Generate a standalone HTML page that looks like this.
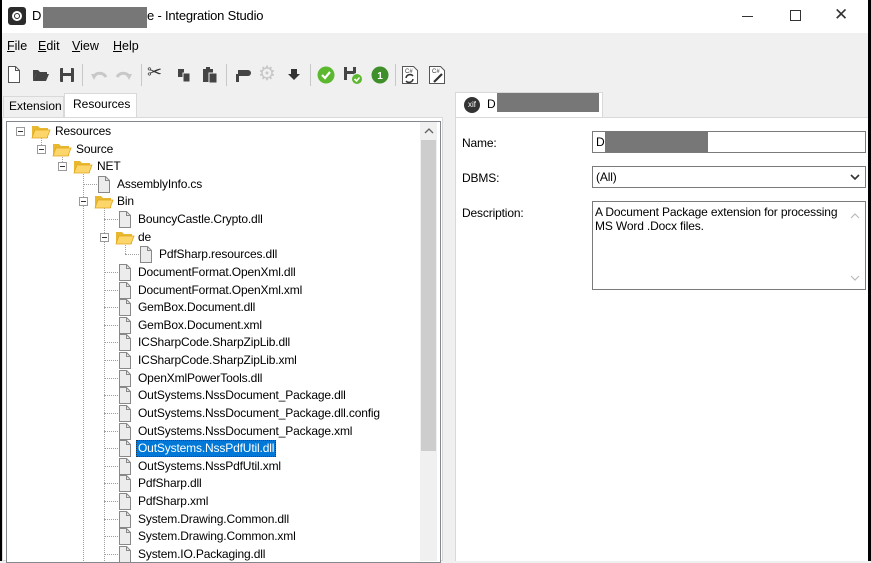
<!DOCTYPE html>
<html><head><meta charset="utf-8">
<style>
*{margin:0;padding:0;box-sizing:border-box}
body{width:871px;height:561px;overflow:hidden;background:#f0f0f0;font-family:"Liberation Sans",sans-serif;font-size:12px;color:#000;position:relative}
.a{position:absolute}
.row{position:absolute;height:18px;line-height:18px;white-space:nowrap;letter-spacing:-0.15px}
.dv{position:absolute;border-left:1px dotted #a0a0a0;width:0}
.dh{position:absolute;border-top:1px dotted #a0a0a0;height:0}
.ex{position:absolute;width:9px;height:9px;border:1px solid #9a9a9a;background:#fff}
.ex:after{content:"";position:absolute;left:1px;top:3px;width:5px;height:1px;background:#333}
.sep{position:absolute;top:64px;width:1px;height:22px;background:#c8c8c8}
.ic{position:absolute;top:66px}
.rp{letter-spacing:-0.15px}
</style></head><body>
<div class="a" style="left:0;top:0;width:871px;height:33px;background:#fff"></div>
<div class="a" style="left:8px;top:7px;width:18px;height:18px;background:#2b2b2b;border-radius:3px"></div>
<div class="a" style="left:12px;top:11px;width:10px;height:10px;border:2px solid #fff;border-radius:50%"></div>
<div class="a" style="left:15px;top:14px;width:4px;height:4px;background:#fff;border-radius:50%"></div>
<div class="a" style="left:32px;top:8px;font-size:13px">D</div>
<div class="a" style="left:43px;top:7px;width:104px;height:21px;background:#777"></div>
<div class="a" style="left:147px;top:8px;font-size:13px;letter-spacing:-0.2px">e - Integration Studio</div>
<div class="a" style="left:742px;top:16px;width:11px;height:1px;background:#333"></div>
<div class="a" style="left:790px;top:10px;width:11px;height:11px;border:1px solid #333"></div>
<div class="a" style="left:834px;top:5px;font-size:17px;color:#333">✕</div>
<div class="a" style="left:868px;top:0;width:3px;height:561px;background:#000"></div>
<div class="a" style="left:0;top:0;width:2px;height:561px;background:#000"></div>
<div class="a" style="left:7px;top:39px;font-size:12.5px"><u>F</u>ile</div>
<div class="a" style="left:38px;top:39px;font-size:12.5px"><u>E</u>dit</div>
<div class="a" style="left:72px;top:39px;font-size:12.5px"><u>V</u>iew</div>
<div class="a" style="left:113px;top:39px;font-size:12.5px"><u>H</u>elp</div>
<svg class="ic" style="left:7px" width="14" height="17"><path d="M1.5 .5h7l4 4v12h-11z" fill="#fff" stroke="#555"/><path d="M8.5 .5v4h4" fill="none" stroke="#555"/></svg>
<svg class="ic" style="left:32px" width="18" height="17"><path d="M1 4h5l2 2h7v2H4l-3 7z" fill="#444"/><path d="M4 8h13l-3 7H1z" fill="#444"/></svg>
<svg class="ic" style="left:59px" width="16" height="17"><rect x="1" y="2" width="14" height="14" rx="1" fill="#444"/><rect x="4" y="2" width="8" height="5" fill="#f0f0f0"/><rect x="4" y="10" width="8" height="6" fill="#f0f0f0"/></svg>
<div class="sep" style="left:82px"></div>
<svg class="ic" style="left:90px" width="18" height="17"><path d="M4 11c2-5 9-5 12 0" fill="none" stroke="#c8c8c8" stroke-width="3"/><path d="M1 8l6 0-3 6z" fill="#c8c8c8"/></svg>
<svg class="ic" style="left:115px" width="18" height="17"><path d="M14 11c-2-5-9-5-12 0" fill="none" stroke="#c8c8c8" stroke-width="3"/><path d="M17 8l-6 0 3 6z" fill="#c8c8c8"/></svg>
<div class="sep" style="left:141px"></div>
<div class="a" style="left:147px;top:62px;font-size:18px;color:#333">✂</div>
<svg class="ic" style="left:176px" width="16" height="17"><rect x="2" y="3" width="6" height="8" fill="#444"/><rect x="7" y="7" width="7" height="9" fill="#444" stroke="#f0f0f0"/></svg>
<svg class="ic" style="left:202px" width="16" height="17"><rect x="1" y="3" width="10" height="13" fill="#444"/><rect x="4" y="1" width="4" height="4" fill="#444"/><rect x="7" y="7" width="8" height="10" fill="#444" stroke="#f0f0f0"/></svg>
<div class="sep" style="left:226px"></div>
<svg class="ic" style="left:232px" width="20" height="17"><path d="M6 4h10a3 3 0 0 1 0 6H6z" fill="#444"/><path d="M4 16V8h3v8z" fill="#444"/></svg>
<div class="a" style="left:258px;top:61px;font-size:20px;color:#c8c8c8">⚙</div>
<svg class="ic" style="left:287px" width="14" height="17"><path d="M4 3h6v5h3l-6 6-6-6h3z" fill="#333"/></svg>
<div class="sep" style="left:310px"></div>
<svg class="ic" style="left:317px" width="18" height="18"><circle cx="9" cy="9" r="8.5" fill="#5cb82f"/><path d="M5 9l3 3 5-6" fill="none" stroke="#fff" stroke-width="2.2"/></svg>
<svg class="ic" style="left:343px" width="20" height="18"><rect x="1" y="1" width="12" height="13" fill="#444"/><rect x="4" y="1" width="6" height="4" fill="#f0f0f0"/><rect x="4" y="8" width="6" height="6" fill="#f0f0f0"/><circle cx="14" cy="13" r="5.5" fill="#5cb82f" stroke="#f0f0f0"/><path d="M11.5 13l2 2 3-3.5" fill="none" stroke="#fff" stroke-width="1.6"/></svg>
<svg class="ic" style="left:371px" width="18" height="18"><circle cx="9" cy="9" r="8.5" fill="#3f8f2a"/><text x="9" y="13" font-size="10" font-weight="bold" fill="#fff" text-anchor="middle" font-family="Liberation Sans">1</text></svg>
<div class="sep" style="left:395px"></div>
<svg class="ic" style="left:401px" width="18" height="18"><path d="M1.5 .5h11l4 4v13h-15z" fill="#fff" stroke="#555"/><text x="4" y="7" font-size="6" fill="#333" font-family="Liberation Sans">C#</text><path d="M5 12a4 4 0 0 1 7-2M12 13a4 4 0 0 1-7 2" fill="none" stroke="#333" stroke-width="1.5"/></svg>
<svg class="ic" style="left:428px" width="18" height="18"><path d="M1.5 .5h11l4 4v13h-15z" fill="#fff" stroke="#555"/><text x="4" y="7" font-size="6" fill="#333" font-family="Liberation Sans">C#</text><path d="M6 16l8-8" stroke="#333" stroke-width="2.2"/></svg>
<div class="a" style="left:3px;top:96px;width:61px;height:21px;border:1px solid #d9d9d9;border-bottom:none;background:#f0f0f0;line-height:19px;padding-left:5px">Extension</div>
<div class="a" style="left:64px;top:93px;width:73px;height:25px;border:1px solid #d9d9d9;border-bottom:none;background:#fff;line-height:21px;padding-left:8px">Resources</div>
<div class="a" style="left:2px;top:117px;width:441px;height:444px;background:#fff;border:1px solid #d9d9d9"></div>
<div class="a" style="left:6px;top:121px;width:435px;height:442px;background:#fff;border:1px solid #828790"></div>
<div class="a" style="left:420px;top:122px;width:17px;height:439px;background:#f0f0f0"></div>
<svg class="a" style="left:424px;top:127px" width="10" height="8"><path d="M1 6l4-4 4 4" fill="none" stroke="#606060" stroke-width="1.3"/></svg>
<div class="a" style="left:421px;top:140px;width:15px;height:311px;background:#cdcdcd"></div>
<div class="dv" style="left:41px;top:135px;height:14px"></div>
<div class="dv" style="left:62px;top:153px;height:13px"></div>
<div class="dv" style="left:83px;top:170px;height:391px"></div>
<div class="dv" style="left:104px;top:205px;height:356px"></div>
<div class="dv" style="left:125px;top:241px;height:13px"></div>
<div class="dh" style="left:83px;top:184px;width:14px"></div>
<div class="dh" style="left:125px;top:254px;width:14px"></div>
<div class="dh" style="left:104px;top:219px;width:14px"></div>
<div class="dh" style="left:104px;top:272px;width:14px"></div><div class="dh" style="left:104px;top:290px;width:14px"></div><div class="dh" style="left:104px;top:307px;width:14px"></div><div class="dh" style="left:104px;top:325px;width:14px"></div><div class="dh" style="left:104px;top:342px;width:14px"></div><div class="dh" style="left:104px;top:360px;width:14px"></div><div class="dh" style="left:104px;top:378px;width:14px"></div><div class="dh" style="left:104px;top:395px;width:14px"></div><div class="dh" style="left:104px;top:413px;width:14px"></div><div class="dh" style="left:104px;top:431px;width:14px"></div><div class="dh" style="left:104px;top:448px;width:14px"></div><div class="dh" style="left:104px;top:466px;width:14px"></div><div class="dh" style="left:104px;top:483px;width:14px"></div><div class="dh" style="left:104px;top:501px;width:14px"></div><div class="dh" style="left:104px;top:519px;width:14px"></div><div class="dh" style="left:104px;top:536px;width:14px"></div><div class="dh" style="left:104px;top:554px;width:14px"></div>
<div class="ex" style="left:16px;top:127px"></div>
<div class="ex" style="left:37px;top:145px"></div>
<div class="ex" style="left:58px;top:162px"></div>
<div class="ex" style="left:79px;top:197px"></div>
<div class="ex" style="left:100px;top:233px"></div>
<svg class="a" style="left:31px;top:124px" width="20" height="15"><path d="M1 2h6l2 2h8v10H1z" fill="#e8b930"/><path d="M4 6h15l-3 8H1z" fill="#fcd66a" stroke="#e0a820" stroke-width=".8"/></svg>
<svg class="a" style="left:52px;top:142px" width="20" height="15"><path d="M1 2h6l2 2h8v10H1z" fill="#e8b930"/><path d="M4 6h15l-3 8H1z" fill="#fcd66a" stroke="#e0a820" stroke-width=".8"/></svg>
<svg class="a" style="left:73px;top:159px" width="20" height="15"><path d="M1 2h6l2 2h8v10H1z" fill="#e8b930"/><path d="M4 6h15l-3 8H1z" fill="#fcd66a" stroke="#e0a820" stroke-width=".8"/></svg>
<svg class="a" style="left:94px;top:194px" width="20" height="15"><path d="M1 2h6l2 2h8v10H1z" fill="#e8b930"/><path d="M4 6h15l-3 8H1z" fill="#fcd66a" stroke="#e0a820" stroke-width=".8"/></svg>
<svg class="a" style="left:115px;top:230px" width="20" height="15"><path d="M1 2h6l2 2h8v10H1z" fill="#e8b930"/><path d="M4 6h15l-3 8H1z" fill="#fcd66a" stroke="#e0a820" stroke-width=".8"/></svg>
<svg class="a" style="left:97px;top:176px" width="14" height="17"><path d="M1.5 .5h7l4 4v12h-11z" fill="#ececec" stroke="#888"/><path d="M8.5 .5v4h4" fill="none" stroke="#888"/></svg>
<svg class="a" style="left:139px;top:246px" width="14" height="17"><path d="M1.5 .5h7l4 4v12h-11z" fill="#ececec" stroke="#888"/><path d="M8.5 .5v4h4" fill="none" stroke="#888"/></svg>
<svg class="a" style="left:118px;top:211px" width="14" height="17"><path d="M1.5 .5h7l4 4v12h-11z" fill="#ececec" stroke="#888"/><path d="M8.5 .5v4h4" fill="none" stroke="#888"/></svg>
<svg class="a" style="left:118px;top:264px" width="14" height="17"><path d="M1.5 .5h7l4 4v12h-11z" fill="#ececec" stroke="#888"/><path d="M8.5 .5v4h4" fill="none" stroke="#888"/></svg>
<svg class="a" style="left:118px;top:282px" width="14" height="17"><path d="M1.5 .5h7l4 4v12h-11z" fill="#ececec" stroke="#888"/><path d="M8.5 .5v4h4" fill="none" stroke="#888"/></svg>
<svg class="a" style="left:118px;top:299px" width="14" height="17"><path d="M1.5 .5h7l4 4v12h-11z" fill="#ececec" stroke="#888"/><path d="M8.5 .5v4h4" fill="none" stroke="#888"/></svg>
<svg class="a" style="left:118px;top:317px" width="14" height="17"><path d="M1.5 .5h7l4 4v12h-11z" fill="#ececec" stroke="#888"/><path d="M8.5 .5v4h4" fill="none" stroke="#888"/></svg>
<svg class="a" style="left:118px;top:334px" width="14" height="17"><path d="M1.5 .5h7l4 4v12h-11z" fill="#ececec" stroke="#888"/><path d="M8.5 .5v4h4" fill="none" stroke="#888"/></svg>
<svg class="a" style="left:118px;top:352px" width="14" height="17"><path d="M1.5 .5h7l4 4v12h-11z" fill="#ececec" stroke="#888"/><path d="M8.5 .5v4h4" fill="none" stroke="#888"/></svg>
<svg class="a" style="left:118px;top:370px" width="14" height="17"><path d="M1.5 .5h7l4 4v12h-11z" fill="#ececec" stroke="#888"/><path d="M8.5 .5v4h4" fill="none" stroke="#888"/></svg>
<svg class="a" style="left:118px;top:387px" width="14" height="17"><path d="M1.5 .5h7l4 4v12h-11z" fill="#ececec" stroke="#888"/><path d="M8.5 .5v4h4" fill="none" stroke="#888"/></svg>
<svg class="a" style="left:118px;top:405px" width="14" height="17"><path d="M1.5 .5h7l4 4v12h-11z" fill="#ececec" stroke="#888"/><path d="M8.5 .5v4h4" fill="none" stroke="#888"/></svg>
<svg class="a" style="left:118px;top:423px" width="14" height="17"><path d="M1.5 .5h7l4 4v12h-11z" fill="#ececec" stroke="#888"/><path d="M8.5 .5v4h4" fill="none" stroke="#888"/></svg>
<svg class="a" style="left:118px;top:440px" width="14" height="17"><path d="M1.5 .5h7l4 4v12h-11z" fill="#ececec" stroke="#888"/><path d="M8.5 .5v4h4" fill="none" stroke="#888"/></svg>
<svg class="a" style="left:118px;top:458px" width="14" height="17"><path d="M1.5 .5h7l4 4v12h-11z" fill="#ececec" stroke="#888"/><path d="M8.5 .5v4h4" fill="none" stroke="#888"/></svg>
<svg class="a" style="left:118px;top:475px" width="14" height="17"><path d="M1.5 .5h7l4 4v12h-11z" fill="#ececec" stroke="#888"/><path d="M8.5 .5v4h4" fill="none" stroke="#888"/></svg>
<svg class="a" style="left:118px;top:493px" width="14" height="17"><path d="M1.5 .5h7l4 4v12h-11z" fill="#ececec" stroke="#888"/><path d="M8.5 .5v4h4" fill="none" stroke="#888"/></svg>
<svg class="a" style="left:118px;top:511px" width="14" height="17"><path d="M1.5 .5h7l4 4v12h-11z" fill="#ececec" stroke="#888"/><path d="M8.5 .5v4h4" fill="none" stroke="#888"/></svg>
<svg class="a" style="left:118px;top:528px" width="14" height="17"><path d="M1.5 .5h7l4 4v12h-11z" fill="#ececec" stroke="#888"/><path d="M8.5 .5v4h4" fill="none" stroke="#888"/></svg>
<svg class="a" style="left:118px;top:546px" width="14" height="17"><path d="M1.5 .5h7l4 4v12h-11z" fill="#ececec" stroke="#888"/><path d="M8.5 .5v4h4" fill="none" stroke="#888"/></svg>
<div class="row" style="left:55px;top:122px">Resources</div>
<div class="row" style="left:76px;top:140px">Source</div>
<div class="row" style="left:97px;top:157px">NET</div>
<div class="row" style="left:117px;top:175px">AssemblyInfo.cs</div>
<div class="row" style="left:117px;top:192px">Bin</div>
<div class="row" style="left:138px;top:210px">BouncyCastle.Crypto.dll</div>
<div class="row" style="left:138px;top:228px">de</div>
<div class="row" style="left:159px;top:245px">PdfSharp.resources.dll</div>
<div class="row" style="left:138px;top:263px">DocumentFormat.OpenXml.dll</div>
<div class="row" style="left:138px;top:281px">DocumentFormat.OpenXml.xml</div>
<div class="row" style="left:138px;top:298px">GemBox.Document.dll</div>
<div class="row" style="left:138px;top:316px">GemBox.Document.xml</div>
<div class="row" style="left:138px;top:333px">ICSharpCode.SharpZipLib.dll</div>
<div class="row" style="left:138px;top:351px">ICSharpCode.SharpZipLib.xml</div>
<div class="row" style="left:138px;top:369px">OpenXmlPowerTools.dll</div>
<div class="row" style="left:138px;top:386px">OutSystems.NssDocument_Package.dll</div>
<div class="row" style="left:138px;top:404px">OutSystems.NssDocument_Package.dll.config</div>
<div class="row" style="left:138px;top:422px">OutSystems.NssDocument_Package.xml</div>
<div class="row" style="left:136px;top:440px;height:17px;line-height:15px;background:#0078d7;color:#fff;border:1px dotted #333;padding:0 1px">OutSystems.NssPdfUtil.dll</div>
<div class="row" style="left:138px;top:457px">OutSystems.NssPdfUtil.xml</div>
<div class="row" style="left:138px;top:474px">PdfSharp.dll</div>
<div class="row" style="left:138px;top:492px">PdfSharp.xml</div>
<div class="row" style="left:138px;top:510px">System.Drawing.Common.dll</div>
<div class="row" style="left:138px;top:527px">System.Drawing.Common.xml</div>
<div class="row" style="left:138px;top:545px">System.IO.Packaging.dll</div>
<div class="a" style="left:455px;top:92px;width:148px;height:26px;background:#fff;border:1px solid #d9d9d9;border-bottom:none"></div>
<div class="a" style="left:464px;top:97px;width:16px;height:16px;border-radius:50%;background:#333;color:#fff;font-size:8px;line-height:16px;text-align:center">xif</div>
<div class="a" style="left:487px;top:97px">D</div>
<div class="a" style="left:497px;top:93px;width:102px;height:19px;background:#777"></div>
<div class="a" style="left:455px;top:117px;width:413px;height:444px;background:#fff;border-left:1px solid #d9d9d9;border-top:1px solid #d9d9d9"></div>
<div class="a rp" style="left:462px;top:136px">Name:</div>
<div class="a rp" style="left:462px;top:171px">DBMS:</div>
<div class="a rp" style="left:462px;top:206px">Description:</div>
<div class="a" style="left:592px;top:131px;width:274px;height:22px;border:1px solid #7a7a7a;padding:3px 0 0 3px">Do</div>
<div class="a" style="left:605px;top:131px;width:103px;height:21px;background:#777"></div>
<div class="a rp" style="left:592px;top:166px;width:274px;height:22px;border:1px solid #7a7a7a;padding:3px 0 0 3px">(All)</div>
<div class="a" style="left:845px;top:167px;width:20px;height:20px;background:#fff"></div>
<svg class="a" style="left:850px;top:173px" width="10" height="8"><path d="M1 2l4 4 4-4" fill="none" stroke="#333" stroke-width="1.6"/></svg>
<div class="a rp" style="left:592px;top:201px;width:274px;height:89px;border:1px solid #7a7a7a;padding:3px 0 0 2px;line-height:14px">A Document Package extension for processing<br>MS Word .Docx files.</div>
<svg class="a" style="left:850px;top:212px" width="10" height="8"><path d="M1 6l4-4 4 4" fill="none" stroke="#bbb" stroke-width="1.2"/></svg>
<svg class="a" style="left:850px;top:274px" width="10" height="8"><path d="M1 2l4 4 4-4" fill="none" stroke="#bbb" stroke-width="1.2"/></svg>
</body></html>
